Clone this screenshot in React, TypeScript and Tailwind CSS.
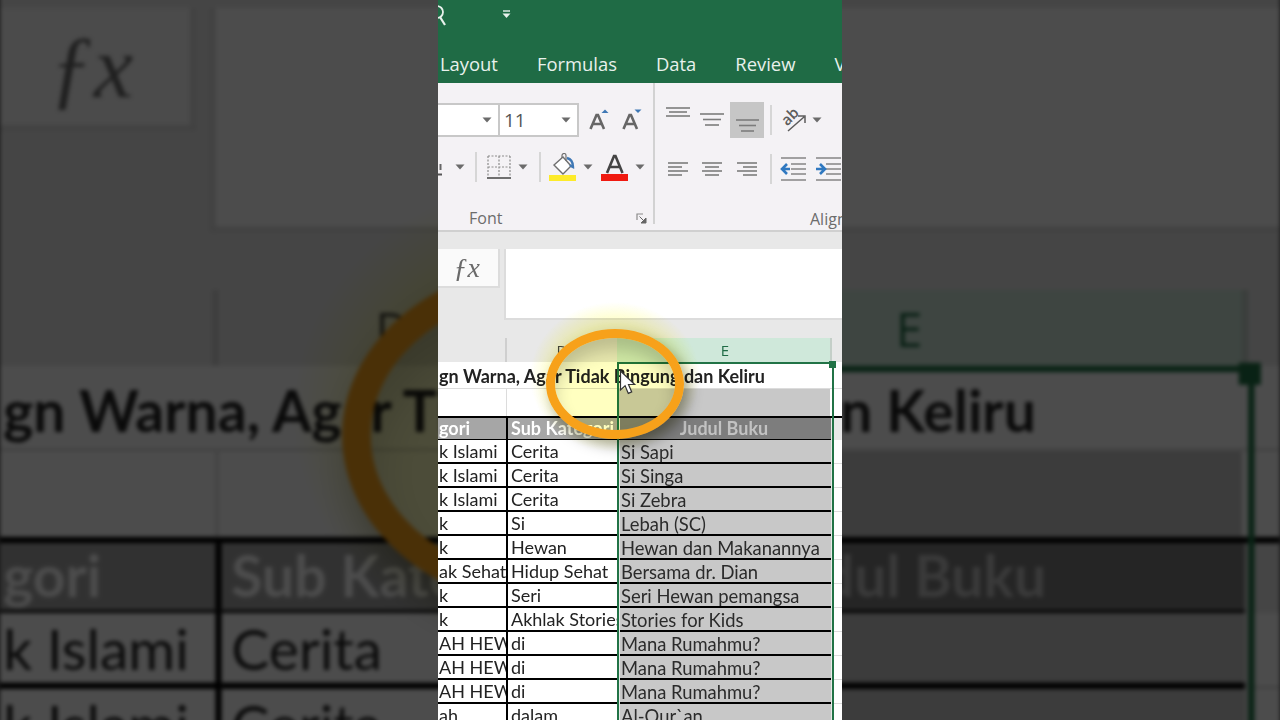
import React from 'react'

const rows = [
  ['k Islami', 'Cerita', 'Si Sapi'],
  ['k Islami', 'Cerita', 'Si Singa'],
  ['k Islami', 'Cerita', 'Si Zebra'],
  ['k', 'Si', 'Lebah (SC)'],
  ['k', 'Hewan', 'Hewan dan Makanannya'],
  ['ak Sehat', 'Hidup Sehat', 'Bersama dr. Dian'],
  ['k', 'Seri', 'Seri Hewan pemangsa'],
  ['k', 'Akhlak Stories', 'Stories for Kids'],
  ['AH HEWAN', 'di', 'Mana Rumahmu?'],
  ['AH HEWAN', 'di', 'Mana Rumahmu?'],
  ['AH HEWAN', 'di', 'Mana Rumahmu?'],
  ['ah', 'dalam', 'Al-Qur`an'],
]

function Caret({ className = '' }: { className?: string }) {
  return (
    <svg width="10" height="6" viewBox="0 0 10 6" className={`shrink-0 ${className}`}>
      <path d="M0.5 0.5h9L5 5.5z" fill="#6b6b6b" />
    </svg>
  )
}

function Lines({ w, h, lines, className = '' }: { w: number; h: number; lines: number[][]; className?: string }) {
  return (
    <svg width={w} height={h} viewBox={`0 0 ${w} ${h}`} className={`shrink-0 ${className}`}>
      {lines.map(([x1, x2, y], i) => (
        <line key={i} x1={x1} x2={x2} y1={y} y2={y} stroke="#7c7c7c" strokeWidth="1.6" />
      ))}
    </svg>
  )
}

function Divider({ className = '' }: { className?: string }) {
  return <div className={`h-[30px] w-[2px] shrink-0 bg-[#d6d6d6] ${className}`} />
}

function SizeA({ up }: { up?: boolean }) {
  return (
    <svg width="20" height="22" viewBox="0 0 20 22" className="shrink-0">
      <path d="M1.5 20L7.5 6h1.5l6 14M4 15h9" fill="none" stroke="#666" strokeWidth="2.6" />
      {up ? <path d="M12.5 4l3.5-3.5L19.5 4z" fill="#3f78b5" /> : <path d="M12.5 0.5h7L16 4z" fill="#3f78b5" />}
    </svg>
  )
}

function Ribbon() {
  return (
    <div className="flex h-[149px] shrink-0 border-b-2 border-[#d0d0d0] bg-[#f4f2f5]">
      {/* Font group */}
      <div className="relative mb-[6px] flex w-[217px] shrink-0 flex-col border-r-2 border-[#d2d2d2] pt-[20px]">
        <div className="flex h-[34px] items-center">
          <div className="flex h-[34px] w-[62px] items-center justify-end border-y-2 border-r-2 border-[#c8c8c8] bg-white pr-[6px]">
            <Caret />
          </div>
          <div className="flex h-[34px] w-[79px] items-center justify-between border-y-2 border-r-2 border-[#c8c8c8] bg-white pl-[4px] pr-[6px] font-['Open_Sans',sans-serif] text-[19px] text-[#555]">
            11
            <Caret />
          </div>
          <div className="ml-[10px]"><SizeA up /></div>
          <div className="ml-[13px]"><SizeA /></div>
        </div>
        <div className="mt-[15px] flex h-[32px] items-center">
          <svg width="4" height="20" viewBox="0 0 4 20" className="shrink-0">
            <path d="M2.5 7v6" stroke="#666" strokeWidth="2" />
            <path d="M0 17.5h4" stroke="#555" strokeWidth="2" />
          </svg>
          <Caret className="ml-[13px]" />
          <Divider className="ml-[10px]" />
          <svg width="24" height="24" viewBox="0 0 24 24" className="ml-[10px] shrink-0">
            <path d="M1 1h22M1 12h22M1 1v22M12 1v22M23 1v22" fill="none" stroke="#8b8b8b" strokeWidth="1.2" strokeDasharray="2 1.5" />
            <path d="M0 23h24" stroke="#6f6f6f" strokeWidth="2" />
          </svg>
          <Caret className="ml-[7px]" />
          <Divider className="ml-[11px]" />
          <svg width="28" height="28" viewBox="0 0 28 28" className="ml-[8px] shrink-0">
            <path d="M5 12L14 4l8 9-8 8z" fill="#fff" stroke="#6f6f6f" strokeWidth="1.4" />
            <path d="M13 5V2.5a2 2 0 0 1 4 0V8" fill="none" stroke="#6f6f6f" strokeWidth="1.2" />
            <path d="M18 5c4 1 6 4 6 9l-2-1-1-1" fill="none" stroke="#3f78b5" strokeWidth="2.4" />
            <rect x="0" y="22" width="27" height="6" fill="#fdeb2a" />
          </svg>
          <Caret className="ml-[6px]" />
          <svg width="27" height="28" viewBox="0 0 27 28" className="ml-[8px] shrink-0">
            <path d="M6 20L13 3h1.5l7 17M8.5 14h11" fill="none" stroke="#444" strokeWidth="2.6" />
            <rect x="0" y="21" width="27" height="7" fill="#f01a10" />
          </svg>
          <Caret className="ml-[7px]" />
        </div>
        <div className="mt-[26px] flex items-center font-['Open_Sans',sans-serif] text-[16px] leading-[20px] text-[#6c6c6c]">
          <span className="ml-[31px]">Font</span>
          <svg width="11" height="11" viewBox="0 0 11 11" className="ml-[134px] shrink-0">
            <path d="M1 7V1h6" fill="none" stroke="#8a8a8a" strokeWidth="1.2" />
            <path d="M3.5 3.5L9 9M10 5v5H5z" fill="#666" stroke="#666" strokeWidth="1" />
          </svg>
        </div>
      </div>

      {/* Alignment group */}
      <div className="flex min-w-0 flex-1 flex-col overflow-hidden pt-[19px]">
        <div className="flex h-[36px] items-center">
          <Lines w={24} h={10} lines={[[0, 24, 1], [3, 21, 5], [0, 24, 9]]} className="mb-[16px] ml-[11px]" />
          <Lines w={24} h={14} lines={[[0, 24, 1], [3, 21, 6.5], [5, 19, 12]]} className="ml-[10px]" />
          <div className="ml-[6px] flex h-[36px] w-[34px] shrink-0 items-end justify-center bg-[#c6c6c6] pb-[6px]">
            <Lines w={23} h={13} lines={[[0, 23, 1], [3, 20, 6.5], [5, 18, 12]]} />
          </div>
          <Divider className="ml-[6px]" />
          <svg width="26" height="24" viewBox="0 0 26 24" className="ml-[9px] shrink-0">
            <text x="1" y="14" transform="rotate(-45 9 10)" fontSize="15" fontWeight="600" fill="#5c5c5c" fontFamily="Open Sans, sans-serif">ab</text>
            <path d="M7 23L23 9M17 8h7v7" fill="none" stroke="#5c5c5c" strokeWidth="1.5" />
          </svg>
          <Caret className="ml-[5px]" />
        </div>
        <div className="mt-[15px] flex h-[32px] items-center">
          <Lines w={20} h={14} lines={[[0, 20, 1], [0, 14, 5], [0, 20, 9], [0, 14, 13]]} className="ml-[13px]" />
          <Lines w={20} h={14} lines={[[0, 20, 1], [3, 17, 5], [0, 20, 9], [3, 17, 13]]} className="ml-[14px]" />
          <Lines w={20} h={14} lines={[[0, 20, 1], [6, 20, 5], [0, 20, 9], [6, 20, 13]]} className="ml-[15px]" />
          <Divider className="ml-[13px]" />
          <svg width="26" height="24" viewBox="0 0 26 24" className="ml-[8px] shrink-0">
            <path d="M1 1h25M11 7h15M11 12h15M11 17h15M1 23h25" stroke="#858585" strokeWidth="1.6" />
            <path d="M10 12H3M7 7l-5 5 5 5" fill="none" stroke="#2f78c0" strokeWidth="2.6" />
          </svg>
          <svg width="26" height="24" viewBox="0 0 26 24" className="ml-[9px] shrink-0">
            <path d="M1 1h25M11 7h15M11 12h15M11 17h15M1 23h25" stroke="#858585" strokeWidth="1.6" />
            <path d="M1 12h7M5 7l5 5-5 5" fill="none" stroke="#2f78c0" strokeWidth="2.6" />
          </svg>
        </div>
        <div className="mt-[24px] whitespace-nowrap pl-[155px] font-['Open_Sans',sans-serif] text-[16px] leading-[20px] text-[#6c6c6c]">Alignment</div>
      </div>
    </div>
  )
}

function TitleBar() {
  return (
    <div className="flex h-[83px] shrink-0 flex-col bg-[#1f6b45] text-[#e8f1ec]">
      <div className="flex h-[51px] items-start pt-[5px]">
        <svg width="8" height="21" viewBox="0 0 8 21" className="shrink-0">
          <circle cx="-1" cy="7" r="6" fill="none" stroke="#e8f1ec" strokeWidth="1.8" />
          <path d="M2 12l5 8" stroke="#e8f1ec" strokeWidth="2.2" />
        </svg>
        <svg width="9" height="9" viewBox="0 0 9 9" className="ml-[56px] mt-[5px] shrink-0">
          <path d="M1 1h7" stroke="#e8f1ec" strokeWidth="1.4" />
          <path d="M0.5 3.5h8L4.5 8z" fill="#e8f1ec" />
        </svg>
      </div>
      <div className="flex gap-[39px] whitespace-nowrap pl-[2px] font-['Open_Sans',sans-serif] text-[18.4px] leading-[26px]">
        <span>Layout</span>
        <span>Formulas</span>
        <span>Data</span>
        <span>Review</span>
        <span>View</span>
      </div>
    </div>
  )
}

function Cell({ className = '', children }: { className?: string; children?: React.ReactNode }) {
  return <div className={`flex items-center overflow-hidden whitespace-nowrap ${className}`}>{children}</div>
}

function Sheet() {
  return (
    <div className="relative isolate h-[488px] w-[404px] overflow-hidden bg-[#e8e8e8] font-['Lato',sans-serif] text-[18px] text-[#222]">
      {/* formula bar */}
      <div className="flex gap-[4px] pt-[17px]">
        <div className="flex h-[39px] w-[62px] items-center justify-end border-r-2 border-b-2 border-[#dcdcdc] bg-[#fafafa] pr-[18px]">
          <span className="font-['Liberation_Serif',serif] text-[28px] italic text-[#6a6a6a]">ƒx</span>
        </div>
        <div className="h-[71px] flex-1 border-l-2 border-b-2 border-[#dcdcdc] bg-white" />
      </div>

      {/* column headers */}
      <div className="mt-[18px] flex h-[24px] font-['Open_Sans',sans-serif] text-[15px] text-[#444]">
        <div className="w-[69px] border-r-2 border-[#cfcfcf]" />
        <div className="flex w-[110px] items-center justify-center">D</div>
        <div className="flex w-[215px] items-center justify-center border-r-2 border-[#c4cfc8] bg-[#cfe8da] pl-[3px] text-[#1f6b45]">E</div>
      </div>

      {/* title row */}
      <div className="flex h-[27px] border-b border-[#dcdcdc] bg-white">
        <Cell className="w-[396px] pl-px pt-[3px] font-bold">gn Warna, Agar Tidak Bingung dan Keliru</Cell>
      </div>
      {/* blank row */}
      <div className="flex h-[27px] bg-white">
        <div className="w-[69px] border-r border-[#dcdcdc]" />
        <div className="w-[111px] border-r border-[#dcdcdc]" />
        <div className="ml-px w-[211px] bg-[#c8c8c8]" />
      </div>

      {/* table header */}
      <div className="flex h-[23px] border-t-2 border-black font-bold text-white">
        <Cell className="w-[70px] border-r-2 border-black bg-[#a6a6a6] pl-px">gori</Cell>
        <Cell className="w-[111px] bg-[#a6a6a6] pl-[3px]">Sub Kategori</Cell>
        <Cell className="ml-px w-[211px] justify-center bg-[#7d7d7d] pr-[3px] text-[#c2c2c2]">Judul Buku</Cell>
      </div>
      <div className="h-[1px] w-[393px] bg-black" />

      {/* data rows */}
      {rows.map((r, i) => (
        <div key={i} className="flex h-[24px]">
          <Cell className="w-[70px] border-r-2 border-b-2 border-black bg-white pl-px pt-px">{r[0]}</Cell>
          <Cell className="w-[111px] border-b-2 border-black bg-white pl-[3px] pt-px">{r[1]}</Cell>
          <Cell className="ml-px w-[211px] border-b-2 border-black bg-[#c8c8c8] pl-px pt-[3px] text-[18.4px] text-[#2b2b2b]">{r[2]}</Cell>
          <div className="ml-[2px] flex-1 border-b border-[#dcdcdc] bg-white" />
        </div>
      ))}

      {/* selection outline */}
      <div className="absolute bottom-0 left-[179px] top-[130px] w-[217px] border-x-2 border-t-2 border-[#217346]" />
      <div className="absolute left-[391px] top-[129px] h-[7px] w-[7px] bg-[#217346]" />

      {/* highlight ring */}
      <div className="absolute left-[92px] top-[70px] h-[150px] w-[170px] rounded-[50%] bg-[radial-gradient(closest-side,rgba(255,255,150,0.6)_70%,rgba(255,255,200,0)_100%)] mix-blend-multiply" />
      <div className="absolute left-[108px] top-[97px] h-[110px] w-[138px] rounded-[50%] border-[9px] border-[#f7a11a] shadow-[5px_7px_14px_rgba(0,0,0,0.35),inset_0_12px_16px_rgba(0,0,0,0.18)]" />

      {/* mouse pointer */}
      <svg width="18" height="26" viewBox="0 0 18 26" className="absolute left-[181px] top-[138px]">
        <path d="M1.5 1v19l4.6-4.2 3.2 7.6 3.4-1.5-3.2-7.4h6.2z" fill="#fff" stroke="#333" strokeWidth="1.2" />
      </svg>
    </div>
  )
}

export default function App() {
  return (
    <div className="relative flex h-[720px] w-[1280px] justify-center overflow-hidden bg-[#4b4b4b]">
      {/* zoomed, dimmed backdrop */}
      <div className="absolute inset-0 blur-[2px]">
        <div className="absolute left-0 top-[-46px] origin-top-left scale-[3.168]">
          <Sheet />
        </div>
      </div>
      <div className="absolute inset-0 bg-black/70" />

      <div className="relative flex h-[720px] w-[404px] flex-col overflow-hidden">
        <TitleBar />
        <Ribbon />
        <Sheet />
      </div>
    </div>
  )
}
